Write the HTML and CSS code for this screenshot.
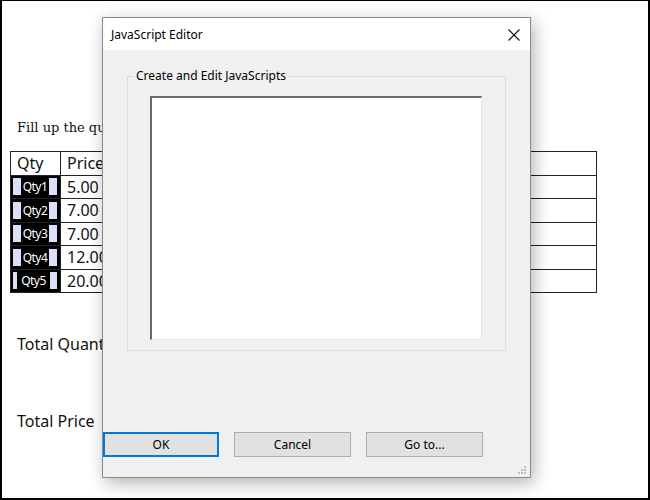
FILE: index.html
```html
<!DOCTYPE html>
<html>
<head>
<meta charset="utf-8">
<link rel="stylesheet" href="styles.css">
</head>
<body>
<div class="page">
  <div class="doc">
    <p class="intro">Fill up the quantity of each item below.</p>
    <table class="order">
      <tr class="head"><th class="c-qty">Qty</th><th class="c-price">Price</th><th class="c-total">Total</th></tr>
      <tr><td class="qcell"><div class="field"><span class="sel">Qty1</span></div></td><td>5.00</td><td></td></tr>
      <tr><td class="qcell"><div class="field"><span class="sel">Qty2</span></div></td><td>7.00</td><td></td></tr>
      <tr><td class="qcell"><div class="field"><span class="sel">Qty3</span></div></td><td>7.00</td><td></td></tr>
      <tr><td class="qcell"><div class="field"><span class="sel">Qty4</span></div></td><td>12.00</td><td></td></tr>
      <tr class="last"><td class="qcell"><div class="field field-wide"><span class="sel">Qty5</span></div></td><td>20.00</td><td></td></tr>
    </table>
    <p class="total">Total Quantity</p>
    <p class="total total-price">Total Price</p>
  </div>

  <div class="dialog">
    <div class="titlebar">
      <span class="title">JavaScript Editor</span>
      <svg class="close" width="12" height="12" viewBox="0 0 12 12"><path d="M0.5 0.5 L11.5 11.5 M11.5 0.5 L0.5 11.5" stroke="#111" stroke-width="1.1" fill="none"/></svg>
    </div>
    <div class="dlg-body">
      <fieldset class="group">
        <legend>Create and Edit JavaScripts</legend>
        <textarea class="editor"></textarea>
      </fieldset>
      <div class="buttons">
        <button class="btn btn-default">OK</button>
        <button class="btn">Cancel</button>
        <button class="btn">Go to...</button>
      </div>
    </div>
    <svg class="grip" width="10" height="10" viewBox="0 0 10 10">
      <rect x="7" y="1" width="2" height="2" fill="#bcbcbc"/>
      <rect x="4" y="4" width="2" height="2" fill="#bcbcbc"/>
      <rect x="7" y="4" width="2" height="2" fill="#bcbcbc"/>
      <rect x="1" y="7" width="2" height="2" fill="#bcbcbc"/>
      <rect x="4" y="7" width="2" height="2" fill="#bcbcbc"/>
      <rect x="7" y="7" width="2" height="2" fill="#bcbcbc"/>
    </svg>
  </div>
</div>
</body>
</html>
```
FILE: styles.css
```css
html, body {
  margin: 0;
  padding: 0;
  background: #fff;
}

.page {
  position: relative;
  width: 650px;
  height: 500px;
  box-sizing: border-box;
  border: 2px solid #000;
  border-top-width: 1px;
  background: #fff;
  overflow: hidden;
}

.doc {
  padding: 118px 0 0 8px;
}

.intro {
  margin: 0 0 14px 7px;
  font-family: "DejaVu Serif", serif;
  font-size: 13px;
  line-height: 18px;
  color: #111;
}

.order {
  border-collapse: collapse;
  width: 587px;
  font-family: "Noto Sans", sans-serif;
  font-size: 16px;
  color: #111;
}

.order th, .order td {
  border: 1px solid #222;
  padding: 0 0 0 6px;
  height: 22.5px;
  text-align: left;
  font-weight: normal;
  line-height: 18px;
}

.order .c-qty { width: 43px; }
.order .c-price { width: 180px; }

.order .qcell {
  background: #000;
  padding: 0 2px;
}

.order tr.last .qcell {
  border-top: 1px solid #fff;
}

.field {
  width: 44px;
  height: 17px;
  box-sizing: border-box;
  background: #dcdff8;
  padding-left: 8px;
}

.field-wide {
  padding-left: 4px;
}

.sel {
  display: block;
  width: 28px;
  height: 17px;
  background: #000;
  color: #fff;
  font-family: "Noto Sans", sans-serif;
  font-size: 12px;
  line-height: 17px;
  letter-spacing: -0.5px;
  text-align: center;
}

.field-wide .sel {
  width: 33px;
}

.total {
  margin: 41px 0 0 7px;
  font-family: "Noto Sans", sans-serif;
  font-size: 16px;
  line-height: 20px;
  color: #111;
}

.total-price {
  margin-top: 57px;
}

/* dialog */
.dialog {
  position: absolute;
  left: 100px;
  top: 16px;
  width: 429px;
  height: 461px;
  box-sizing: border-box;
  border: 1px solid #8a8a8a;
  background: #f0f0f0;
  box-shadow: 3px 5px 16px rgba(0, 0, 0, 0.3);
  font-family: "Noto Sans", sans-serif;
  font-size: 12px;
  color: #000;
  display: flex;
  flex-direction: column;
}

.titlebar {
  height: 32px;
  background: #fff;
  display: flex;
  align-items: center;
  justify-content: space-between;
  padding: 0 10px 0 8px;
}

.title {
  font-size: 12px;
}

.close {
  display: block;
  margin-top: 1px;
}

.dlg-body {
  flex: 1;
  display: flex;
  flex-direction: column;
}

.group {
  margin: 18px 24px 0 24px;
  padding: 12px 0 10px 0;
  border: 1px solid #dcdcdc;
  min-width: 0;
}

.group legend {
  margin-left: 6px;
  padding: 0 2px;
  font-size: 12px;
  line-height: 16px;
  color: #000;
}

.editor {
  display: block;
  width: 332px;
  height: 244px;
  box-sizing: border-box;
  margin: 0 0 0 22px;
  padding: 0;
  resize: none;
  background: #fff;
  border-style: solid;
  border-width: 2px 1px 1px 2px;
  border-color: #6a6a6a #e3e3e3 #e3e3e3 #6a6a6a;
  outline: none;
}

.buttons {
  margin-top: 81px;
  display: flex;
  gap: 15px;
}

.btn {
  width: 117px;
  height: 25px;
  box-sizing: border-box;
  background: #e1e1e1;
  border: 1px solid #adadad;
  font-family: "Noto Sans", sans-serif;
  font-size: 12px;
  color: #000;
  padding: 0;
  margin: 0;
}

.btn-default {
  width: 116px;
  border: 2px solid #0078d7;
}

.grip {
  position: absolute;
  right: 3px;
  bottom: 2px;
}
```
